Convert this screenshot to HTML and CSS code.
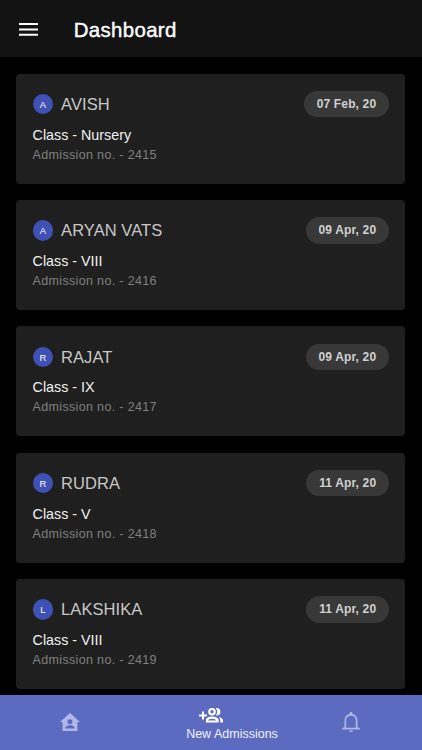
FILE: index.html
```html
<!DOCTYPE html>
<html lang="en">
<head>
<meta charset="utf-8">
<title>Dashboard</title>
<link rel="stylesheet" href="styles.css">
</head>
<body>
<div class="app">
  <header class="topbar">
    <svg class="menu" viewBox="0 0 19 13"><path d="M0 0h19v2H0zM0 5.4h19v2H0zM0 10.8h19v2H0z"/></svg>
    <h1 class="title">Dashboard</h1>
  </header>
  <main class="list">
    <article class="card">
      <div class="head"><span class="avatar">A</span><h2 class="name">AVISH</h2><span class="chip">07 Feb, 20</span></div>
      <p class="class">Class - Nursery</p>
      <p class="number">Admission no. - 2415</p>
    </article>
    <article class="card">
      <div class="head"><span class="avatar">A</span><h2 class="name">ARYAN VATS</h2><span class="chip">09 Apr, 20</span></div>
      <p class="class">Class - VIII</p>
      <p class="number">Admission no. - 2416</p>
    </article>
    <article class="card">
      <div class="head"><span class="avatar">R</span><h2 class="name">RAJAT</h2><span class="chip">09 Apr, 20</span></div>
      <p class="class">Class - IX</p>
      <p class="number">Admission no. - 2417</p>
    </article>
    <article class="card">
      <div class="head"><span class="avatar">R</span><h2 class="name">RUDRA</h2><span class="chip">11 Apr, 20</span></div>
      <p class="class">Class - V</p>
      <p class="number">Admission no. - 2418</p>
    </article>
    <article class="card">
      <div class="head"><span class="avatar">L</span><h2 class="name">LAKSHIKA</h2><span class="chip">11 Apr, 20</span></div>
      <p class="class">Class - VIII</p>
      <p class="number">Admission no. - 2419</p>
    </article>
  </main>
  <nav class="tabs">
    <a class="tab">
      <svg class="home" viewBox="0 0 20 18"><path fill-rule="evenodd" d="M10 0 0 9h2.600v9h14.800V9H20zM10 6.200a2.500 2.500 0 1 1 0 5 2.500 2.500 0 0 1 0-5zM5.400 15.400v-.8c0-1.500 3-2.400 4.600-2.400s4.600.9 4.600 2.400v.8z"/></svg>
    </a>
    <a class="tab active">
      <svg class="people" viewBox="0 0 24 15">
        <path d="M3 3.500h2v3h3v2H5v3H3v-3H0v-2h3z"/>
        <path fill-rule="evenodd" d="M13 0a3.800 3.800 0 1 1 0 7.600A3.800 3.800 0 0 1 13 0zm0 2.100a1.700 1.700 0 1 0 0 3.400 1.700 1.700 0 0 0 0-3.400z"/>
        <path fill-rule="evenodd" d="M13 8.600c2.500 0 6.700 1.200 6.700 3.800v2.200H6.900v-2.200c0-2.600 3.600-3.800 6.100-3.800zm0 2.100c-1.900 0-3.700.7-4 1.800h8.300c-.3-1.100-2.500-1.800-4.300-1.800z"/>
        <path d="M17.600 0a3.800 3.800 0 0 1 0 7.600l-.8-.2a5.700 5.700 0 0 0 0-7.200zM19.700 8.900c2.200.5 4.300 1.600 4.300 3.500v2.200h-2.700v-2.200c0-1.500-.6-2.600-1.600-3.500z"/>
      </svg>
      <span class="label">New Admissions</span>
    </a>
    <a class="tab">
      <svg class="bell" viewBox="0 0 18 20"><path fill-rule="evenodd" d="M9 0c.9 0 1.500.6 1.500 1.400v.7c3.100.6 5 3.200 5 6.400v6.700l2.300.8v1.500H.2V16l2.300-.8V8.500c0-3.200 1.900-5.800 5-6.400v-.7C7.500.6 8.100 0 9 0zm0 3.700c-2.900 0-4.800 2.100-4.800 4.800v7.300h9.600V8.500c0-2.700-1.900-4.800-4.800-4.800z"/><path d="M7.100 18.400h3.800a1.900 1.900 0 0 1-3.800 0z"/></svg>
    </a>
  </nav>
</div>
</body>
</html>
```
FILE: styles.css
```css
* { box-sizing: border-box; }
body {
  margin: 0;
  background: #000;
  font-family: "Liberation Sans", Arial, sans-serif;
}
h1, h2, p { margin: 0; font-weight: 400; }
svg { display: block; flex: none; }
.app {
  height: 750px;
  display: flex;
  flex-direction: column;
  overflow: hidden;
}
.topbar {
  height: 57px;
  flex: none;
  display: flex;
  align-items: center;
  padding: 1px 19.400px 0;
  background: #131313;
}
.menu { width: 19px; height: 13px; fill: #fff; }
.title {
  margin-top: 1px;
  margin-left: 35.400px;
  color: #fff;
  font-size: 20.400px;
  line-height: 28px;
  letter-spacing: 0.350px;
  -webkit-text-stroke: 0.400px #fff;
}
.list {
  flex: 1;
  min-height: 0;
  padding: 16.700px 16.700px 0 16.400px;
  display: flex;
  flex-direction: column;
  gap: 16.300px;
}
.card {
  height: 110px;
  flex: none;
  padding: 17px 16.200px 0;
  border-radius: 4px;
  background: #1f1f1f;
}
.head { height: 27px; display: flex; align-items: center; }
.avatar {
  width: 20.500px;
  height: 20.500px;
  border-radius: 50%;
  background: #3f51b5;
  color: #fff;
  font-size: 9.500px;
  line-height: 21px;
  text-align: center;
}
.name {
  margin-left: 8px;
  color: #c8c8c8;
  font-size: 16.500px;
  line-height: 26px;
  letter-spacing: 0.060px;
}
.chip {
  height: 26.500px;
  margin-left: auto;
  padding: 0 12.900px;
  border-radius: 14px;
  background: #383838;
  color: #d0d0d0;
  font-size: 12px;
  font-weight: 700;
  line-height: 27px;
  letter-spacing: 0.150px;
}
.class {
  margin-top: 7px;
  color: #f0f0f0;
  font-size: 14.300px;
  line-height: 20px;
}
.number {
  color: #808080;
  font-size: 12.500px;
  line-height: 20px;
  letter-spacing: 0.340px;
}
.tabs {
  height: 55.500px;
  flex: none;
  display: grid;
  grid-template-columns: 1fr 1fr 1fr;
  background: #5c6bc0;
}
.tab {
  display: flex;
  flex-direction: column;
  align-items: center;
  justify-content: center;
  fill: #b0b8e8;
}
.active { justify-content: flex-start; padding-top: 13px; fill: #fff; }
.home { width: 20px; height: 18px; }
.people { width: 24px; height: 15px; }
.bell { width: 18px; height: 20px; margin-right: 1.500px; }
.label {
  margin-top: 3.500px;
  margin-left: 42px;
  color: #f0f2ff;
  font-size: 12.500px;
  line-height: 16px;
  white-space: nowrap;
}
```
